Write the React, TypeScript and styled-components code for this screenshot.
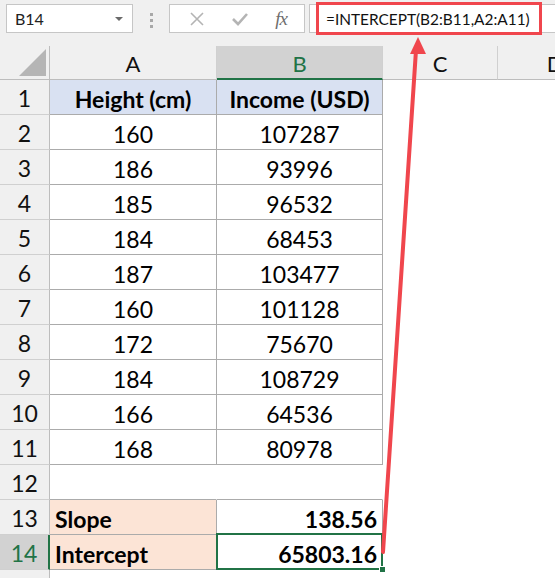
import { createGlobalStyle, styled } from "styled-components"

const GlobalStyle = createGlobalStyle`
  body {
    margin: 0;
    background: #ffffff;
    font-family: Lato, "Open Sans", sans-serif;
  }
`

const Frame = styled.div`
  position: relative;
  width: 555px;
  height: 578px;
  overflow: hidden;
  background: #ffffff;
`

const Toolbar = styled.div`
  display: flex;
  align-items: flex-start;
  height: 46px;
  padding: 4px 0 0 6px;
  box-sizing: border-box;
  background: #f0f0f0;
`

const NameBox = styled.div`
  display: flex;
  align-items: center;
  justify-content: space-between;
  width: 127px;
  height: 29px;
  box-sizing: border-box;
  padding: 0 9px 0 8px;
  background: #ffffff;
  border: 1px solid #c6c6c6;
  font-size: 16px;
  color: #222;
`

const Caret = styled.span`
  width: 0;
  height: 0;
  border-left: 4px solid transparent;
  border-right: 4px solid transparent;
  border-top: 4px solid #6a6a6a;
`

const Grip = styled.div`
  display: flex;
  flex-direction: column;
  gap: 3px;
  margin: 9px 16px 0 17px;

  span {
    width: 3px;
    height: 3px;
    background: #a8a8a8;
  }
`

const FxButtons = styled.div`
  display: flex;
  align-items: center;
  justify-content: space-around;
  width: 136px;
  height: 29px;
  box-sizing: border-box;
  padding: 0 4px 0 6px;
  background: #ffffff;
  border: 1px solid #c6c6c6;
`

const Fx = styled.span`
  font-family: "Liberation Serif", serif;
  font-style: italic;
  font-size: 19px;
  color: #6e6e6e;
  letter-spacing: -1px;
`

const FormulaInput = styled.div`
  display: flex;
  align-items: center;
  flex: 1;
  height: 29px;
  margin-left: 4px;
  box-sizing: border-box;
  padding-left: 6px;
  background: #ffffff;
  border: 1px solid #c6c6c6;
  border-right: none;
`

const Highlight = styled.span`
  display: flex;
  align-items: center;
  flex: none;
  height: 33px;
  width: 226px;
  box-sizing: border-box;
  padding-left: 7px;
  border: 3px solid #f0464d;
  font-size: 15.4px;
  color: #111;
  white-space: nowrap;
  overflow: hidden;
`

const Sheet = styled.div`
  display: grid;
  grid-template-columns: 50px 167px 166px 115px 115px;
  grid-template-rows: 34px;
  grid-auto-rows: 35px;
`

const Corner = styled.div`
  position: relative;
  background: #f0f0f0;
  border-right: 1px solid #bdbdbd;
  border-bottom: 1px solid #bdbdbd;
  box-sizing: border-box;

  &::after {
    content: "";
    position: absolute;
    right: 3px;
    bottom: 3px;
    width: 0;
    height: 0;
    border-left: 27px solid transparent;
    border-bottom: 27px solid #b5b5b5;
  }
`

const ColHeader = styled.div<{ $active?: boolean }>`
  display: flex;
  align-items: center;
  justify-content: center;
  box-sizing: border-box;
  background: ${(p) => (p.$active ? "#d2d2d2" : "#f0f0f0")};
  color: ${(p) => (p.$active ? "#217346" : "#111")};
  border-right: 1px solid #d0d0d0;
  border-bottom: ${(p) => (p.$active ? "2px solid #217346" : "1px solid #bdbdbd")};
  font-size: 22px;
  padding-top: 2px;
`

const RowHeader = styled.div<{ $active?: boolean }>`
  display: flex;
  align-items: center;
  justify-content: center;
  box-sizing: border-box;
  background: ${(p) => (p.$active ? "#d2d2d2" : "#f0f0f0")};
  color: ${(p) => (p.$active ? "#217346" : "#111")};
  border-right: ${(p) => (p.$active ? "2px solid #217346" : "1px solid #bdbdbd")};
  border-bottom: 1px solid #d0d0d0;
  font-size: 23px;
  padding-top: 2px;
`

const Cell = styled.div<{
  $right?: boolean
  $bottom?: boolean
  $bg?: string
  $align?: "left" | "center" | "right"
  $bold?: boolean
  $selected?: boolean
}>`
  position: relative;
  display: flex;
  align-items: center;
  justify-content: ${(p) =>
    p.$align === "left" ? "flex-start" : p.$align === "right" ? "flex-end" : "center"};
  box-sizing: border-box;
  padding: 3px 5px 0 5px;
  background: ${(p) => p.$bg ?? "#ffffff"};
  border-right: 1px solid ${(p) => (p.$right ? "#ababab" : "transparent")};
  border-bottom: 1px solid ${(p) => (p.$bottom ? "#ababab" : "transparent")};
  font-size: 23px;
  font-weight: ${(p) => (p.$bold ? 700 : 400)};
  color: #000;
  white-space: nowrap;

  ${(p) =>
    p.$selected &&
    `
    &::after {
      content: "";
      position: absolute;
      top: -2px;
      left: -1px;
      right: -1px;
      bottom: -1px;
      border: 2px solid #217346;
    }
    &::before {
      content: "";
      position: absolute;
      right: -4px;
      bottom: -4px;
      width: 5px;
      height: 5px;
      background: #217346;
      border: 1px solid #ffffff;
      z-index: 2;
    }
  `}
`

const Arrow = styled.svg`
  position: absolute;
  left: 0;
  top: 0;
  pointer-events: none;
  z-index: 10;
`

const heights = [160, 186, 185, 184, 187, 160, 172, 184, 166, 168]
const incomes = [107287, 93996, 96532, 68453, 103477, 101128, 75670, 108729, 64536, 80978]

function App() {
  return (
    <Frame>
      <GlobalStyle />
      <Toolbar>
        <NameBox>
          B14
          <Caret />
        </NameBox>
        <Grip>
          <span />
          <span />
          <span />
        </Grip>
        <FxButtons>
          <svg width="16" height="16" viewBox="0 0 16 16">
            <path d="M2 2 L14 14 M14 2 L2 14" stroke="#b4b4b4" strokeWidth="1.6" fill="none" />
          </svg>
          <svg width="18" height="16" viewBox="0 0 18 16">
            <path d="M2 8 L7 13 L16 3" stroke="#b4b4b4" strokeWidth="2.6" fill="none" />
          </svg>
          <Fx>fx</Fx>
        </FxButtons>
        <FormulaInput>
          <Highlight>=INTERCEPT(B2:B11,A2:A11)</Highlight>
        </FormulaInput>
      </Toolbar>

      <Sheet>
        <Corner />
        <ColHeader>A</ColHeader>
        <ColHeader $active>B</ColHeader>
        <ColHeader>C</ColHeader>
        <ColHeader>D</ColHeader>

        <RowHeader>1</RowHeader>
        <Cell $right $bottom $bg="#d9e1f2" $bold>Height (cm)</Cell>
        <Cell $right $bottom $bg="#d9e1f2" $bold>Income (USD)</Cell>
        <Cell />
        <Cell />

        {heights.map((h, i) => (
          <>
            <RowHeader key={`r${i}`}>{i + 2}</RowHeader>
            <Cell key={`a${i}`} $right $bottom>{h}</Cell>
            <Cell key={`b${i}`} $right $bottom>{incomes[i]}</Cell>
            <Cell key={`c${i}`} />
            <Cell key={`d${i}`} />
          </>
        ))}

        <RowHeader>12</RowHeader>
        <Cell $bottom />
        <Cell $bottom />
        <Cell />
        <Cell />

        <RowHeader>13</RowHeader>
        <Cell $right $bottom $bg="#fce4d6" $align="left" $bold>Slope</Cell>
        <Cell $right $bottom $align="right" $bold>138.56</Cell>
        <Cell />
        <Cell />

        <RowHeader $active>14</RowHeader>
        <Cell $right $bottom $bg="#fce4d6" $align="left" $bold>Intercept</Cell>
        <Cell $right $bottom $align="right" $bold $selected>65803.16</Cell>
        <Cell />
        <Cell />

        <RowHeader />
        <Cell />
        <Cell />
        <Cell />
        <Cell />
      </Sheet>

      <Arrow width="555" height="578" viewBox="0 0 555 578">
        <line x1="383" y1="552" x2="416" y2="50" stroke="#f0464d" strokeWidth="4" strokeLinecap="round" />
        <polygon points="418,37 410,54 426,54" fill="#f0464d" />
      </Arrow>
    </Frame>
  )
}

export default App
